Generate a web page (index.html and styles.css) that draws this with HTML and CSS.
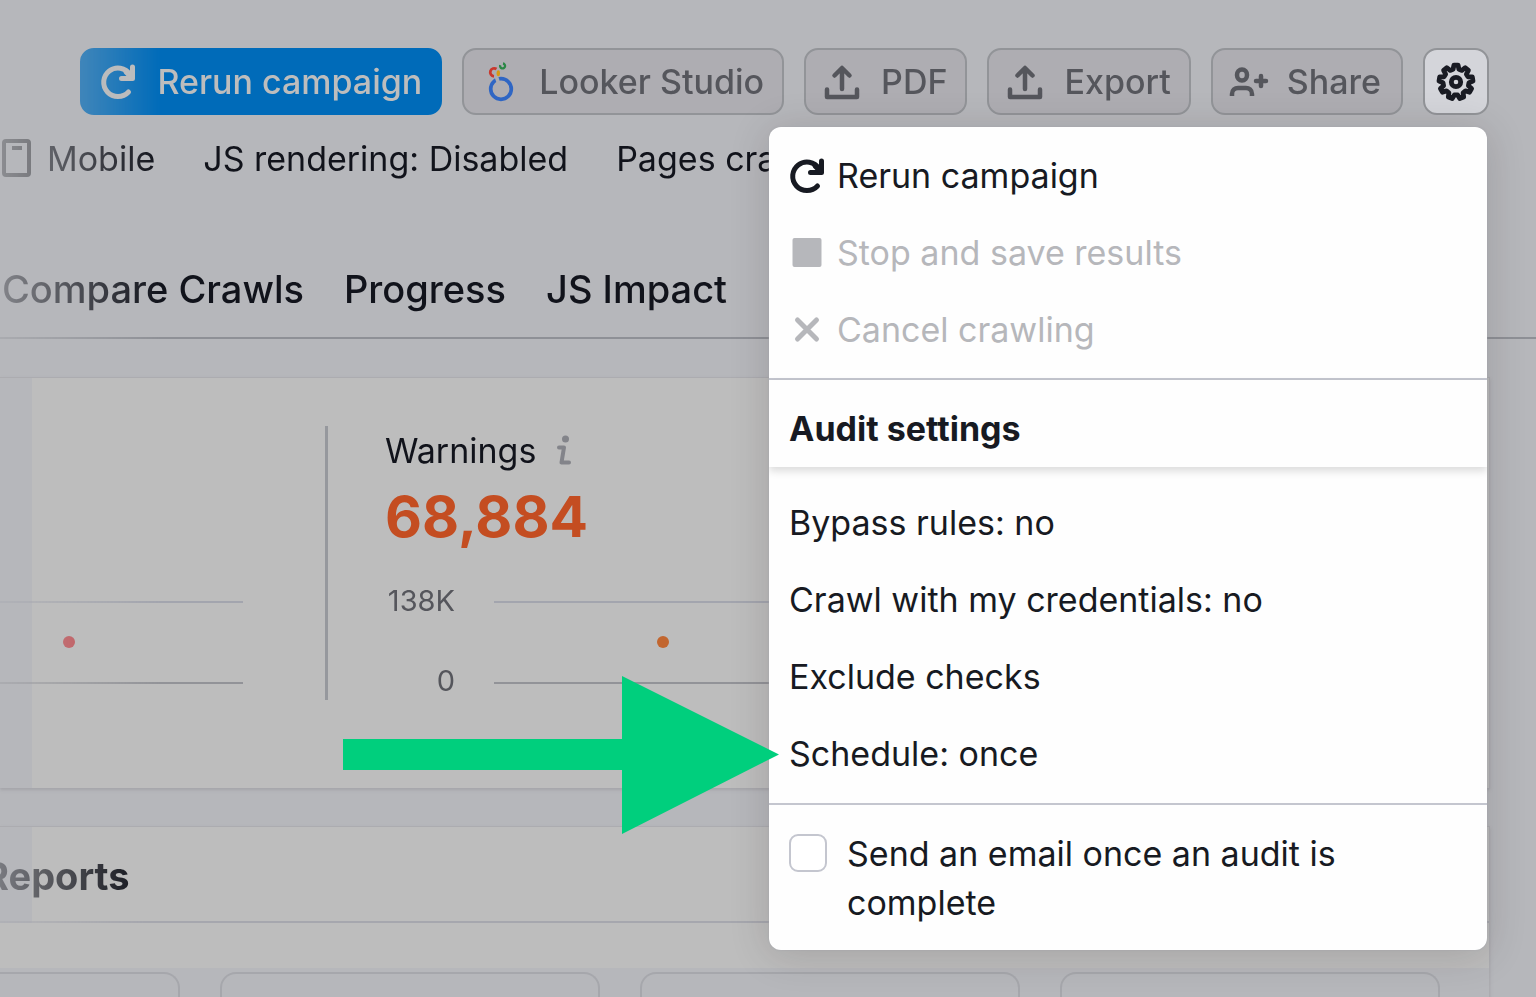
FILE: index.html
```html
<!DOCTYPE html>
<html lang="en">
<head>
    <meta charset="UTF-8">
    <meta name="viewport" content="width=device-width, initial-scale=1.0">
    <title>Site Audit</title>
    <link rel="stylesheet" href="styles.css">
</head>
<body>
    <header class="header">
        <div class="toolbar fade">
            <button type="button" class="btn btn-primary">
                <svg class="icon" viewBox="0 0 36 36" fill="none" stroke="currentColor" stroke-width="5" stroke-linecap="round" stroke-linejoin="round"><path d="M28.500 28A14.300 14.300 0 1 1 30 10.500"/><path d="M32.500 3v11.500H21.500"/><path d="M26 8l6 6" /></svg>
                Rerun campaign
            </button>
            <button type="button" class="btn">
                <svg class="icon" viewBox="0 0 36 40" fill="none"><circle cx="19" cy="27" r="10.300" stroke="#2f66c4" stroke-width="3.700"/><path d="M12.500 15l3.500-1.500 1.800 6-3.300 1z" fill="#aeadb2"/><path d="M14.500 7a4 4 0 1 0-2.500 7.300" stroke="#c9372c" stroke-width="2.800"/><path d="M18.200 3.200a2.500 2.500 0 1 0 2.800-1.700" stroke="#2b8746" stroke-width="2.300"/><ellipse cx="16.300" cy="11.300" rx="1.700" ry="3" fill="#d99a10"/></svg>
                Looker Studio
            </button>
            <button type="button" class="btn">
                <svg class="icon" viewBox="0 0 36 36" fill="none" stroke="currentColor" stroke-width="4.500" stroke-linecap="round" stroke-linejoin="round"><path d="M18 25V5M10.500 11.500L18 4l7.500 7.500"/><path d="M3 25.500V33h30v-7.500"/></svg>
                PDF
            </button>
            <button type="button" class="btn">
                <svg class="icon" viewBox="0 0 36 36" fill="none" stroke="currentColor" stroke-width="4.500" stroke-linecap="round" stroke-linejoin="round"><path d="M18 25V5M10.500 11.500L18 4l7.500 7.500"/><path d="M3 25.500V33h30v-7.500"/></svg>
                Export
            </button>
            <button type="button" class="btn btn-share">
                <svg class="icon icon-wide" viewBox="0 0 40 36" fill="none" stroke="currentColor" stroke-width="4.500"><ellipse cx="13" cy="11" rx="5" ry="5.500"/><path d="M3 32v-2c0-4 3-6 6-6h8c3 0 6 2 6 6v2"/><path d="M32 12v10M27 17h10" stroke-linecap="round"/></svg>
                Share
            </button>
            <button type="button" class="btn btn-gear" aria-label="Settings" aria-expanded="true">
                <svg class="icon icon-gear" viewBox="-20 -20 40 40" fill="none" stroke="currentColor" stroke-width="4.800" stroke-linejoin="round"><path d="M-2.900-12.700L-2.100-16.900 2.100-16.900 2.900-12.700 5.900-11.600 9.300-14.300 12.400-11.600 10.400-7.800 12-5.100 16.300-5 17-.9 13 .7 12.400 3.800 15.600 6.600 13.600 10.200 9.500 8.900 7.100 10.900 7.700 15.100 3.800 16.600 1.600 12.900-1.600 12.900-3.800 16.600-7.700 15.100-7.100 10.900-9.500 8.900-13.600 10.200-15.600 6.600-12.400 3.800-13 .7-17-.9-16.300-5-12-5.100-10.400-7.800-12.400-11.600-9.300-14.300-5.900-11.600z"/><circle r="4.700"/></svg>
            </button>
        </div>

        <div class="menu">
            <ul class="menu-group">
                <li><button type="button" class="menu-item">
                    <svg class="icon" viewBox="0 0 36 36" fill="none" stroke="currentColor" stroke-width="5" stroke-linecap="round" stroke-linejoin="round"><path d="M28.500 28A14.300 14.300 0 1 1 30 10.500"/><path d="M32.500 3v11.500H21.500"/><path d="M26 8l6 6"/></svg>
                    Rerun campaign
                </button></li>
                <li><button type="button" class="menu-item" disabled>
                    <svg class="icon" viewBox="0 0 36 36" fill="currentColor"><rect x="3.500" y="3" width="29" height="29" rx="2"/></svg>
                    Stop and save results
                </button></li>
                <li><button type="button" class="menu-item" disabled>
                    <svg class="icon" viewBox="0 0 36 36" fill="none" stroke="currentColor" stroke-width="5" stroke-linecap="round"><path d="M8.500 8l19 19M27.500 8l-19 19"/></svg>
                    Cancel crawling
                </button></li>
            </ul>
            <h2 class="menu-title">Audit settings</h2>
            <ul class="menu-group menu-settings">
                <li><button type="button" class="menu-item">Bypass rules: no</button></li>
                <li><button type="button" class="menu-item">Crawl with my credentials: no</button></li>
                <li><button type="button" class="menu-item">Exclude checks</button></li>
                <li><button type="button" class="menu-item">Schedule: once</button></li>
            </ul>
            <div class="menu-email">
                <input type="checkbox" id="sendEmail">
                <label for="sendEmail">Send an email once an audit is complete</label>
            </div>
        </div>
    </header>

    <div class="meta fade">
        <span class="device">
            <svg class="icon-device" viewBox="0 0 32 40" fill="none" stroke="currentColor" stroke-width="4"><rect x="4" y="3" width="25" height="34" rx="2"/><path d="M12 10h10"/></svg>
            Mobile
        </span>
        <span>JS rendering: Disabled</span>
        <span>Pages crawled</span>
    </div>

    <nav class="tabs fade">
        <a href="#compare">Compare Crawls</a>
        <a href="#progress">Progress</a>
        <a href="#js-impact">JS Impact</a>
    </nav>

    <main>
        <section class="card">
            <div class="stats fade">
                <div class="stat stat-errors">
                    <div class="plot">
                        <span class="dot dot-error"></span>
                    </div>
                </div>
                <div class="stat stat-warnings">
                    <h3 class="stat-title">
                        Warnings
                        <svg class="icon-info" viewBox="0 0 16 32" fill="none" stroke="currentColor" stroke-width="4" stroke-linecap="round" stroke-linejoin="round"><circle cx="9.500" cy="4" r="3.500" fill="currentColor" stroke="none"/><path d="M3 12.500h5L5.500 27.500H13"/></svg>
                    </h3>
                    <div class="stat-value">68,884</div>
                    <div class="chart">
                        <div class="axis">
                            <span>138K</span>
                            <span>0</span>
                        </div>
                        <div class="plot">
                            <span class="dot dot-warning"></span>
                        </div>
                    </div>
                </div>
            </div>
        </section>

        <section class="card card-reports">
            <h2 class="card-title fade">Reports</h2>
            <div class="tiles fade">
                <div class="tile"></div>
                <div class="tile"></div>
                <div class="tile"></div>
                <div class="tile"></div>
            </div>
        </section>
    </main>

    <svg class="arrow" viewBox="0 0 436 158" aria-hidden="true"><path d="M0 63h279V0l157 78.500L279 158V94H0z"/></svg>
</body>
</html>
```

FILE: styles.css
```css
* {
    margin: 0;
    padding: 0;
    box-sizing: border-box;
}
body {
    font-family: Inter, "Liberation Sans", Arial, sans-serif;
    font-size: 34px;
    background: #b6b7bb;
    color: #11131b;
    min-height: 100vh;
    position: relative;
    overflow: hidden;
}
button {
    font: inherit;
    color: inherit;
    cursor: pointer;
}
ul {
    list-style: none;
}
/* content fades out towards the left edge */
.fade {
    mask-image: linear-gradient(to right, rgba(0, 0, 0, 0.3), #000 160px);
}

/* Toolbar */
.header {
    position: relative;
    z-index: 2;
}
.toolbar {
    display: flex;
    justify-content: flex-end;
    gap: 20px;
    padding: 48px 47px 0;
}
.btn {
    display: flex;
    align-items: center;
    gap: 21px;
    height: 67px;
    padding: 0 18px;
    border: 2px solid #929498;
    border-radius: 14px;
    background: #aeadb2;
    color: #55565c;
    font-size: 34px;
    font-weight: 500;
    white-space: nowrap;
}
.btn-primary {
    border-color: #006bb9;
    background: #006bb9;
    color: #bdbdbd;
}
.btn-share {
    gap: 18px;
    padding: 0 20px 0 16px;
}
.btn-gear {
    padding: 0 11px;
    background: #d4d5da;
    color: #191b23;
}
.icon {
    width: 36px;
    height: 40px;
    flex: none;
}
.icon-wide,
.icon-gear {
    width: 40px;
}

/* Settings menu */
.menu {
    position: absolute;
    top: calc(100% + 12px);
    right: 49px;
    width: 718px;
    overflow: hidden;
    background: #fefefe;
    color: #171a22;
    border-radius: 12px;
    box-shadow: 0 0 2px #a4a5ac, 0 4px 40px rgba(30, 20, 20, 0.16);
}
.menu-group {
    padding: 10px 0;
    border-bottom: 2px solid #c4c6cf;
}
.menu-item {
    display: flex;
    align-items: center;
    gap: 12px;
    width: 100%;
    height: 77px;
    padding: 0 20px;
    border: none;
    background: none;
    text-align: left;
}
.menu-item:disabled {
    color: #b6b7bb;
    cursor: default;
}
.menu-title {
    padding: 25px 20px 14px;
    font-size: 34px;
    line-height: 48px;
    font-weight: 700;
    box-shadow: 0 4px 8px rgba(0, 0, 0, 0.14);
}
.menu-settings {
    padding: 17px 0 11px;
}
.menu-email {
    display: flex;
    gap: 20px;
    padding: 24px 120px 23px 20px;
    line-height: 49px;
}
.menu-email input {
    appearance: none;
    flex: none;
    width: 38px;
    height: 38px;
    margin-top: 5px;
    border: 2px solid #c4c6cf;
    border-radius: 9px;
    background: #fff;
}

/* Page info and tabs */
.meta {
    display: flex;
    align-items: center;
    gap: 48px;
    height: 86px;
    white-space: nowrap;
}
.device {
    display: flex;
    align-items: center;
    gap: 15px;
}
.icon-device {
    width: 32px;
    height: 40px;
    color: #2c2d32;
}
.tabs {
    display: flex;
    align-items: center;
    gap: 40px;
    height: 138px;
    padding: 40px 0 0 2px;
    border-bottom: 2px solid #8e9096;
}
.tabs a {
    color: inherit;
    font-size: 38px;
    font-weight: 500;
    text-decoration: none;
}

/* Cards */
.card {
    margin: 38px 46px 0 0;
    border: solid #acacb0;
    border-width: 1px 1px 0 0;
    background: linear-gradient(to right, #b6b7bb 32px, #bdbdbd 32px);
    box-shadow: 0 2px 3px #a4a4a9;
}
.stats {
    display: flex;
    padding: 48px 0 88px;
}
.stat {
    height: 274px;
}
.stat-errors {
    width: 328px;
    padding: 175px 82px 0 0;
    border-right: 3px solid #96989d;
}
.stat-warnings {
    flex: 1;
    padding: 0 82px 0 57px;
}
.stat-title {
    display: flex;
    align-items: center;
    gap: 20px;
    height: 49px;
    font-size: 34px;
    font-weight: 400;
}
.icon-info {
    width: 16px;
    height: 32px;
    color: #83848a;
}
.stat-value {
    height: 84px;
    line-height: 84px;
    color: #c44d21;
    font-size: 57px;
    font-weight: 700;
}
.chart {
    display: flex;
    gap: 39px;
    padding-top: 42px;
}
.axis {
    display: flex;
    flex-direction: column;
    justify-content: space-between;
    width: 70px;
    height: 120px;
    margin: -20px 0;
    color: #55565c;
    font-size: 29px;
    line-height: 40px;
    text-align: right;
}
.plot {
    position: relative;
    flex: 1;
    height: 83px;
    border: solid #a3a5ae;
    border-width: 2px 0;
    border-bottom-color: #929398;
}
.dot {
    position: absolute;
    top: 33px;
    width: 12px;
    height: 12px;
    border-radius: 50%;
}
.dot-error {
    left: 63px;
    background: #c3333a;
}
.dot-warning {
    left: 163px;
    background: #c2662f;
}
.card-title {
    height: 96px;
    margin-left: -16px;
    line-height: 98px;
    border-bottom: 2px solid #a6a7ae;
    font-size: 38px;
    font-weight: 700;
}
.card-reports {
    overflow: hidden;
}
.tiles {
    display: grid;
    grid-template-columns: repeat(4, 1fr);
    gap: 40px;
    margin-left: -200px;
    padding: 49px 49px 0 0;
    background: linear-gradient(#bdbdbd 45px, #b6b7bb 45px);
}
.tile {
    height: 25px;
    border: 2px solid #a6a7ac;
    border-bottom: none;
    border-radius: 16px 16px 0 0;
    background: #b6b7bb;
}

/* Pointer to the schedule row */
.arrow {
    position: absolute;
    z-index: 3;
    top: 676px;
    left: 343px;
    width: 436px;
    height: 158px;
    fill: #00cf7d;
}
```
